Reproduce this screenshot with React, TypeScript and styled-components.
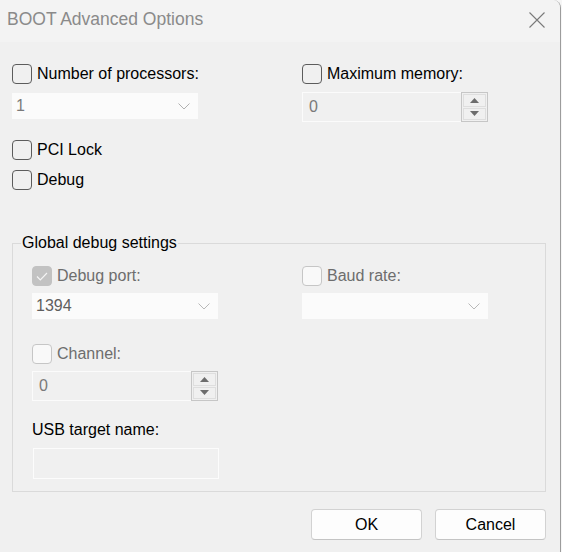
import React from "react";
import styled, { createGlobalStyle } from "styled-components";

const Global = createGlobalStyle`
  html, body { margin: 0; padding: 0; overflow: hidden; background: #f6f6f6; }
  * { box-sizing: border-box; }
  body { font-family: "Liberation Sans", Arial, sans-serif; }
`;

const Screen = styled.div`
  width: 562px;
  height: 552px;
  background: #f6f6f6;
`;

const Window = styled.div`
  width: 561px;
  height: 552px;
  background: #f0f0f0;
  border-right: 1px solid #9c9c9c;
  border-top-right-radius: 8px;
  overflow: hidden;
  display: flex;
  flex-direction: column;
`;

const TitleBar = styled.div`
  height: 42px;
  flex: none;
  background: #f3f3f3;
  display: flex;
  align-items: center;
  justify-content: space-between;
  padding: 0 14px 0 7px;
`;

const Title = styled.div`
  font-size: 17.5px;
  color: #8a8a8a;
  margin-top: -3px;
`;

const CloseBtn = styled.div`
  width: 18px;
  height: 18px;
  display: flex;
  align-items: center;
  justify-content: center;
  margin-top: -3px;
`;

const Content = styled.div`
  padding: 22px 14px 0 12px;
  display: flex;
  flex-direction: column;
`;

const TopGrid = styled.div`
  display: grid;
  grid-template-columns: 290px 1fr;
`;

const Col = styled.div<{ $gap: number }>`
  display: flex;
  flex-direction: column;
  align-items: flex-start;
  gap: ${(p) => p.$gap}px;
`;

const CheckRow = styled.label<{ $disabled?: boolean }>`
  display: flex;
  align-items: center;
  gap: 5px;
  height: 20px;
  font-size: 16px;
  color: ${(p) => (p.$disabled ? "#6d6d6d" : "#000")};
  white-space: nowrap;
`;

const Box = styled.span<{ $disabled?: boolean; $checked?: boolean }>`
  width: 20px;
  height: 20px;
  flex: none;
  border-radius: 4px;
  display: flex;
  align-items: center;
  justify-content: center;
  border: 1px solid
    ${(p) => (p.$checked ? "#c2c2c2" : p.$disabled ? "#c6c6c6" : "#5c5c5c")};
  background: ${(p) =>
    p.$checked ? "#c2c2c2" : p.$disabled ? "#f9f9f9" : "transparent"};
`;

const Checks = styled.div`
  display: flex;
  flex-direction: column;
  gap: 10px;
  margin-top: 18px;
`;

const Combo = styled.div<{ $dark?: boolean }>`
  width: 186px;
  height: 26px;
  background: #fbfbfb;
  display: flex;
  align-items: center;
  justify-content: space-between;
  padding: 0 8px 0 4px;
  font-size: 16px;
  color: ${(p) => (p.$dark ? "#5e5e5e" : "#7a7a7a")};
`;

const Spinner = styled.div`
  width: 186px;
  height: 30px;
  display: flex;
`;

const SpinField = styled.div`
  flex: 1;
  border: 1px solid #fbfbfb;
  border-right: none;
  background: #f0f0f0;
  display: flex;
  align-items: center;
  padding-left: 6px;
  font-size: 16px;
  color: #7a7a7a;
`;

const SpinButtons = styled.div`
  width: 27px;
  border: 1px solid #c6c6c6;
  padding: 1px;
  display: flex;
  flex-direction: column;
  gap: 1px;
`;

const SpinBtn = styled.div`
  flex: 1;
  border: 1px solid #dedede;
  background: #f0f0f0;
  display: flex;
  align-items: center;
  justify-content: center;
`;

const Group = styled.fieldset`
  margin: 43px 0 0 0;
  padding: 13px 0 12px 8px;
  border: 1px solid #dadada;
  min-width: 0;
`;

const Legend = styled.legend`
  padding: 0 1px;
  font-size: 16px;
  color: #000;
  line-height: 20px;
`;

const InnerGrid = styled.div`
  margin-left: 11px;
  display: grid;
  grid-template-columns: 270px 1fr;
  row-gap: 25px;
`;

const UsbSection = styled.div`
  margin-left: 11px;
  margin-top: 19px;
  display: flex;
  flex-direction: column;
  gap: 8px;
`;

const Label = styled.div`
  font-size: 16px;
  line-height: 20px;
  color: #000;
`;

const TextBox = styled.div`
  width: 186px;
  height: 31px;
  margin-left: 1px;
  border: 1px solid #fcfcfc;
  background: #f0f0f0;
`;

const ButtonRow = styled.div`
  display: flex;
  justify-content: flex-end;
  gap: 13px;
  margin-top: 17px;
`;

const Button = styled.button`
  width: 111px;
  height: 31px;
  background: #fdfdfd;
  border: 1px solid #d2d2d2;
  border-bottom-color: #c4c4c4;
  border-radius: 4px;
  font-family: "Liberation Sans", Arial, sans-serif;
  font-size: 16px;
  color: #000;
  padding: 0;
`;

const Chevron = ({ color = "#a0a0a0" }: { color?: string }) => (
  <svg width="12" height="7" viewBox="0 0 12 7">
    <path d="M0.5 0.5 L6 6 L11.5 0.5" fill="none" stroke={color} strokeWidth="1" />
  </svg>
);

const Tri = ({ up }: { up?: boolean }) => (
  <svg width="9" height="5" viewBox="0 0 9 5">
    <path d={up ? "M0 5 L4.5 0 L9 5 Z" : "M0 0 L4.5 5 L9 0 Z"} fill="#6d6d6d" />
  </svg>
);

const Check = ({
  label,
  disabled,
  checked,
}: {
  label: string;
  disabled?: boolean;
  checked?: boolean;
}) => (
  <CheckRow $disabled={disabled}>
    <Box $disabled={disabled} $checked={checked}>
      {checked && (
        <svg width="12" height="9" viewBox="0 0 12 9">
          <path d="M1 4.5 L4.3 7.8 L11 1" fill="none" stroke="#f4f4f4" strokeWidth="1.2" />
        </svg>
      )}
    </Box>
    {label}
  </CheckRow>
);

const SpinBox = ({ value }: { value: string }) => (
  <Spinner>
    <SpinField>{value}</SpinField>
    <SpinButtons>
      <SpinBtn>
        <Tri up />
      </SpinBtn>
      <SpinBtn>
        <Tri />
      </SpinBtn>
    </SpinButtons>
  </Spinner>
);

export default function App() {
  return (
    <Screen>
      <Global />
      <Window>
        <TitleBar>
          <Title>BOOT Advanced Options</Title>
          <CloseBtn>
            <svg width="16" height="16" viewBox="0 0 16 16">
              <path d="M0.5 0.5 L15.5 15.5 M15.5 0.5 L0.5 15.5" stroke="#7a7a7a" strokeWidth="1.1" />
            </svg>
          </CloseBtn>
        </TitleBar>
        <Content>
          <TopGrid>
            <Col $gap={9}>
              <Check label="Number of processors:" />
              <Combo>
                1
                <Chevron color="#b0b0b0" />
              </Combo>
            </Col>
            <Col $gap={8}>
              <Check label="Maximum memory:" />
              <SpinBox value="0" />
            </Col>
          </TopGrid>
          <Checks>
            <Check label="PCI Lock" />
            <Check label="Debug" />
          </Checks>
          <Group>
            <Legend>Global debug settings</Legend>
            <InnerGrid>
              <Col $gap={7}>
                <Check label="Debug port:" disabled checked />
                <Combo $dark>
                  1394
                  <Chevron color="#b8b8b8" />
                </Combo>
              </Col>
              <Col $gap={7}>
                <Check label="Baud rate:" disabled />
                <Combo>
                  <span />
                  <Chevron color="#b8b8b8" />
                </Combo>
              </Col>
              <Col $gap={7}>
                <Check label="Channel:" disabled />
                <SpinBox value="0" />
              </Col>
            </InnerGrid>
            <UsbSection>
              <Label>USB target name:</Label>
              <TextBox />
            </UsbSection>
          </Group>
          <ButtonRow>
            <Button>OK</Button>
            <Button>Cancel</Button>
          </ButtonRow>
        </Content>
      </Window>
    </Screen>
  );
}
